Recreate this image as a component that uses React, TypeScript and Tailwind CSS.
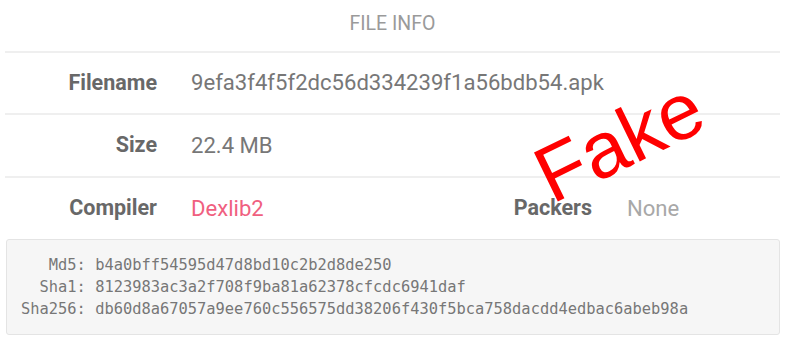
import React from "react";

const roboto = { fontFamily: "Roboto, 'Liberation Sans', sans-serif" };

export default function App() {
  return (
    <div className="relative w-[785px] h-[340px] bg-white overflow-hidden" style={roboto}>
      <div className="px-[5px]">
        <div className="h-[53px] border-b-2 border-[#efefef] flex items-center justify-center pb-[4px]">
          <span className="text-[19.5px] text-[#9a9a9a]">FILE INFO</span>
        </div>

        <div className="h-[62px] border-b-2 border-[#efefef] flex items-center">
          <div className="w-[152px] text-right text-[21.5px] font-bold text-[#686868]">Filename</div>
          <div className="ml-[34px] text-[22.1px] text-[#777777]">9efa3f4f5f2dc56d334239f1a56bdb54.apk</div>
        </div>

        <div className="h-[63px] border-b-2 border-[#efefef] flex items-center">
          <div className="w-[152px] text-right text-[21.5px] font-bold text-[#686868]">Size</div>
          <div className="ml-[34px] text-[22.1px] text-[#777777]">22.4 MB</div>
        </div>

        <div className="h-[61px] flex items-center">
          <div className="w-[152px] text-right text-[21.5px] font-bold text-[#686868]">Compiler</div>
          <div className="ml-[34px] w-[300px] text-[22.1px] text-[#f0607f]">Dexlib2</div>
          <div className="w-[101px] text-right text-[21.5px] font-bold text-[#686868]">Packers</div>
          <div className="ml-[35px] text-[22.1px] text-[#a8a8a8]">None</div>
        </div>

        <div className="ml-[1px] h-[96px] rounded-[3px] border border-[#e4e4e4] bg-[#f6f6f6] pt-[14px] pl-[14px]">
          <pre
            className="m-0 text-[15.4px] leading-[22px] text-[#777777] whitespace-pre"
            style={{ fontFamily: "'DejaVu Sans Mono', 'Liberation Mono', monospace" }}
          >
{`   Md5: b4a0bff54595d47d8bd10c2b2d8de250
  Sha1: 8123983ac3a2f708f9ba81a62378cfcdc6941daf
Sha256: db60d8a67057a9ee760c556575dd38206f430f5bca758dacdd4edbac6abeb98a`}
          </pre>
        </div>
      </div>

      <div className="absolute left-[619px] top-[141px] -translate-x-1/2 -translate-y-1/2 -rotate-[26deg]">
        <span
          className="block text-[79px] leading-none text-[#ff0000]"
          style={{ fontFamily: "'Liberation Sans', Arial, sans-serif" }}
        >
          Fake
        </span>
      </div>
    </div>
  );
}
